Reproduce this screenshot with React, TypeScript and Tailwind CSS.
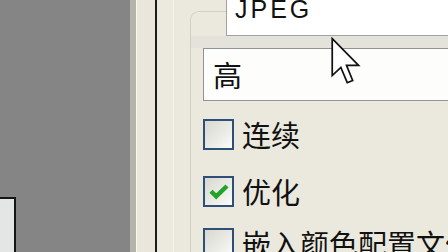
import React from 'react'

const Checkbox: React.FC<{ checked?: boolean }> = ({ checked }) => (
  <div className="w-[31px] h-[31px] shrink-0 border-2 border-[#2f4e78] bg-gradient-to-br from-[#d8d8d0] to-[#fbfbf8] flex items-center justify-center">
    {checked && (
      <svg width="20" height="16" viewBox="0 0 10 8">
        <path d="M1 3.6 L3.6 6.2 L9 1" fill="none" stroke="#22a32a" strokeWidth="2.2" />
      </svg>
    )}
  </div>
)

const Row: React.FC<{ checked?: boolean; label: string; className?: string }> = ({ checked, label, className }) => (
  <div className={`shrink-0 flex items-center gap-[8px] ${className ?? ''}`}>
    <Checkbox checked={checked} />
    <span className="text-[29px] leading-none whitespace-nowrap text-[#111]">{label}</span>
  </div>
)

export default function App() {
  return (
    <div
      className="relative w-[448px] h-[252px] overflow-hidden flex bg-[#ebe9de]"
      style={{ fontFamily: '"Noto Sans CJK SC", "Noto Sans", sans-serif' }}
    >
      {/* gray workspace on the left */}
      <div className="w-[130px] shrink-0 bg-[#858585] flex flex-col justify-end">
        <div className="w-[16px] h-[55px] border-t-2 border-r-2 border-[#151515] bg-[#e4e6e6]" />
      </div>
      <div className="w-[6px] shrink-0 bg-[#b4b3ab]" />
      <div className="w-[1px] shrink-0 bg-[#f7f6f1]" />

      {/* dialog body */}
      <div className="flex-1 flex bg-[#ebe9de]">
        <div className="w-[18px] shrink-0 bg-[#e9e7dc]" />
        <div className="w-[2px] shrink-0 bg-[#1c1c1c]" />
        <div className="w-[16px] shrink-0 bg-[#eceadf]" />
        <div className="w-[1px] shrink-0 bg-[#f5f4ee]" />
        <div className="w-[16px] shrink-0" />

        <div className="flex-1 mt-[11px] border-l border-t border-[#d3d0c0] rounded-tl-[9px] flex flex-col">
          <div className="shrink-0 -mt-[15px] ml-[35px] h-[39px] bg-white border border-[#9ea3a6] border-r-0 flex items-end pb-[13px] pl-[8px]">
            <span
              className="text-[25px] leading-none tracking-[3px] text-[#111]"
              style={{ fontFamily: '"Liberation Sans", Arial, sans-serif' }}
            >
              JPEG
            </span>
          </div>
          <div className="shrink-0 h-[12px] bg-[#e3e2db]" />
          <div className="shrink-0 ml-[12px] h-[53px] bg-[#fdfdfc] border border-[#8f9396] border-r-0 flex items-center pl-[9px]">
            <span className="text-[29px] leading-none text-[#111]">高</span>
          </div>
          <Row label="连续" className="ml-[12px] mt-[18px]" />
          <Row label="优化" checked className="ml-[12px] mt-[26px]" />
          <Row label="嵌入颜色配置文件" className="ml-[12px] mt-[21px]" />
        </div>
      </div>

      {/* mouse pointer */}
      <svg className="absolute left-[331px] top-[37px]" width="32" height="50" viewBox="0 0 13 20">
        <path
          d="M0.5 0.5 L0.5 15.5 L4 12.2 L6.6 18.4 L8.8 17.5 L6.3 11.4 L11.2 11.4 Z"
          fill="#fff"
          stroke="#111"
          strokeWidth="0.7"
          strokeLinejoin="miter"
        />
      </svg>
    </div>
  )
}
